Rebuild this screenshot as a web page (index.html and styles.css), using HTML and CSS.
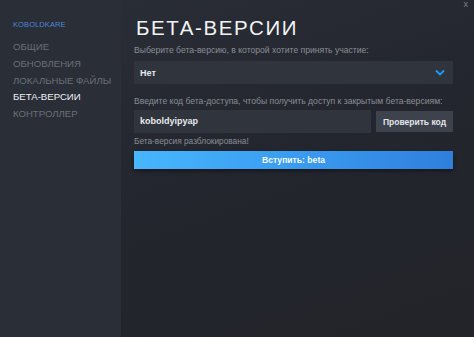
FILE: index.html
```html
<!doctype html>
<html lang="ru">
<head>
  <meta charset="UTF-8" />
  <meta name="viewport" content="width=device-width, initial-scale=1.0" />
  <title>Бета-версии</title>
  <link rel="stylesheet" href="styles.css">
</head>
<body>

<section class="window">
  <nav class="side">
    <div class="side-game">KOBOLDKARE</div>
    <a class="side-item">Общие</a>
    <a class="side-item">Обновления</a>
    <a class="side-item">Локальные файлы</a>
    <a class="side-item active">Бета-версии</a>
    <a class="side-item">Контроллер</a>
  </nav>

  <main class="main">
    <span class="close">x</span>
    <h1 class="title">Бета-версии</h1>

    <p class="label">Выберите бета-версию, в которой хотите принять участие:</p>
    <div class="select">
      <span>Нет</span>
      <svg class="chev" width="10" height="7" viewBox="0 0 10 7">
        <path d="M1,1.5 L5,5.5 L9,1.5" fill="none" stroke="#1a9fff" stroke-width="1.8" />
      </svg>
    </div>

    <p class="label label-code">Введите код бета-доступа, чтобы получить доступ к закрытым бета-версиям:</p>
    <div class="code-row">
      <div class="code-inp">koboldyipyap</div>
      <button class="btn-check">Проверить код</button>
    </div>
    <p class="status">Бета-версия разблокирована!</p>
    <button class="btn-join">Вступить: beta</button>
  </main>
</section>

</body>
</html>
```

FILE: styles.css
```css
html, body {
  margin: 0;
  padding: 0;
}
* {
  box-sizing: border-box;
}
body {
  width: 474px;
  height: 337px;
  font-family: "Liberation Sans", Arial, sans-serif;
  background: #23262e;
  overflow: hidden;
}
.window {
  display: flex;
  height: 337px;
}
/*Sidebar*/
.side {
  width: 121px;
  flex: none;
  background: #2a2e37;
  padding: 20px 0 0 13px;
  display: flex;
  flex-direction: column;
}
.side-game {
  font-size: 7.5px;
  color: #4d86d6;
  margin-bottom: 10px;
  letter-spacing: 0.1px;
}
.side-item {
  font-size: 9.6px;
  text-transform: uppercase;
  color: #6a6e77;
  height: 16.8px;
  line-height: 16.8px;
}
.side-item.active {
  color: #eef0f3;
}
/*Main*/
.main {
  position: relative;
  flex: 1;
  padding: 0 21px 0 13px;
  background: linear-gradient(160deg, #292d35 0%, #23262e 45%, #222429 100%);
}
.close {
  position: absolute;
  top: -1px;
  right: 6px;
  font-size: 9px;
  color: #7b7f88;
}
.title {
  margin: 18px 0 0 2px;
  font-size: 20.5px;
  font-weight: normal;
  letter-spacing: 1.6px;
  text-transform: uppercase;
  color: #f2f3f5;
  line-height: 20px;
}
.label {
  margin: 7px 0 0;
  font-size: 8.6px;
  color: #8a8e96;
  line-height: 11px;
}
.select {
  margin-top: 5px;
  height: 23px;
  background: #30343c;
  display: flex;
  align-items: center;
  justify-content: space-between;
  padding: 0 8px 0 6px;
  font-size: 9px;
  font-weight: bold;
  color: #e8eaee;
}
.label-code {
  margin-top: 12px;
}
.code-row {
  display: flex;
  margin-top: 3px;
  gap: 5px;
}
.code-inp {
  flex: 1;
  height: 23px;
  background: #30343c;
  font-size: 9px;
  font-weight: bold;
  color: #e8eaee;
  line-height: 23px;
  padding-left: 6px;
}
.btn-check {
  width: 77px;
  height: 21px;
  margin-top: 1px;
  border: none;
  background: #3d424d;
  color: #e3e5e9;
  font-family: inherit;
  font-size: 8.5px;
  font-weight: bold;
  padding: 0;
}
.status {
  margin: 3px 0 0;
  font-size: 8.3px;
  color: #8a8e96;
  line-height: 11px;
}
.btn-join {
  display: block;
  width: 100%;
  height: 18px;
  margin-top: 4px;
  border: none;
  background: linear-gradient(90deg, #47b7fe 0%, #3a9cf0 50%, #2f7fdd 100%);
  color: #f3f8ff;
  font-family: inherit;
  font-size: 8.6px;
  font-weight: bold;
  padding: 0;
  box-shadow: 0 2px 4px rgba(0,0,0,0.45);
}
```
